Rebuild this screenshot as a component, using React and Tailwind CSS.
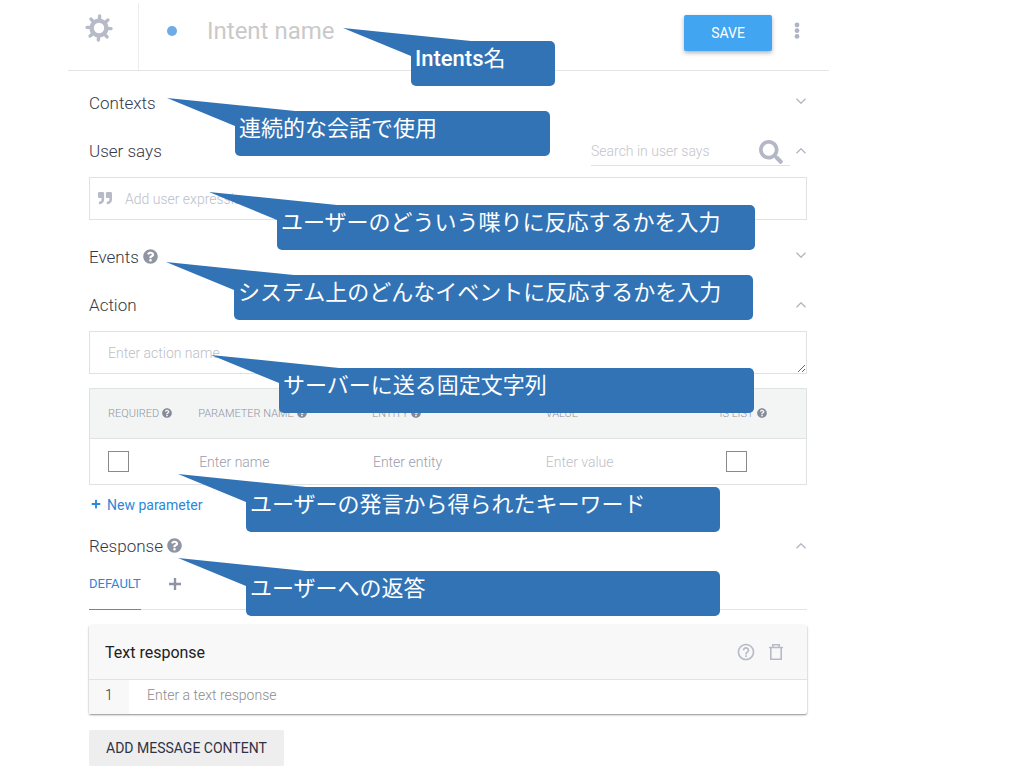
import React, { useState } from "react";
import {
  FaPlus,
  FaQuestionCircle,
  FaQuoteRight,
  FaSearch,
} from "react-icons/fa";
import { MdHelpOutline } from "react-icons/md";

const GearIcon = () => (
  <svg width="28" height="28" viewBox="0 0 28 28" fill="none" stroke="#b7bbc8">
    <circle cx="14" cy="14" r="7.4" strokeWidth="4.4" />
    <g strokeWidth="3.4" strokeLinecap="round">
      {[3, 48, 93, 138, 183, 228, 273, 318].map((angle) => (
        <path key={angle} d="M14 5.5V2" transform={`rotate(${angle} 14 14)`} />
      ))}
    </g>
  </svg>
);

const DotsIcon = () => (
  <svg width="6" height="18" viewBox="0 0 6 18" fill="#b0b4c2">
    <circle cx="3" cy="3" r="2.4" />
    <circle cx="3" cy="8.7" r="2.4" />
    <circle cx="3" cy="14.4" r="2.4" />
  </svg>
);

const TrashIcon = () => (
  <svg width="14" height="18" viewBox="0 0 14 18" fill="none" stroke="#b7bbc8" strokeWidth="1.6">
    <path d="M0 4.5h14M3.8 4V1.8h6.4V4M1.8 4.5v11.7h10.4V4.5" />
  </svg>
);

const Chevron = ({ open }) => (
  <svg width="10" height="6" viewBox="0 0 10 6" fill="none" stroke="#b0b5c2" strokeWidth="1.3">
    <path d={open ? "M0.5 5.3L5 0.8L9.5 5.3" : "M0.5 0.7L5 5.2L9.5 0.7"} />
  </svg>
);

// Blue speech bubble with a tail going up and to the left
const Callout = ({ place, children }) => (
  <div
    className={`absolute z-10 h-[45px] rounded-[5px] bg-[#3273b6] pl-1 text-[22px] leading-9 whitespace-nowrap text-white ${place}`}
  >
    <svg
      className="absolute -top-[13px] -left-[68px]"
      width="128"
      height="28"
      viewBox="0 0 128 28"
      fill="#3273b6"
    >
      <path d="M0 0L128 13V28H68Z" />
    </svg>
    <span className="relative">{children}</span>
  </div>
);

const SectionHeader = ({ title, help, open, onToggle, children }) => (
  <div className="flex h-12 items-center">
    <h2 className="pt-px text-[17px] font-light text-[#343849]">{title}</h2>
    {help && (
      <FaQuestionCircle className="mb-px ml-1 text-[15px] text-[#9095a3]" />
    )}
    <div className="ml-auto flex items-center">
      {children}
      <button
        type="button"
        aria-label={`Toggle ${title}`}
        onClick={onToggle}
        className={`mr-px flex h-6 w-[10px] items-center ${open ? "" : "pb-[5px]"}`}
      >
        <Chevron open={open} />
      </button>
    </div>
  </div>
);

const HeadCell = ({ label, help, className }) => (
  <th className={`p-0 text-left font-light ${className}`}>
    <span className="flex items-center gap-[3px] pb-px">
      <span className="pt-[2px]">{label}</span>
      {help && <FaQuestionCircle className="text-[10px] text-[#858a99]" />}
    </span>
  </th>
);

const App = () => {
  const [open, setOpen] = useState({
    contexts: false,
    userSays: true,
    events: false,
    action: true,
    response: true,
  });

  const toggle = (key) => setOpen((prev) => ({ ...prev, [key]: !prev[key] }));

  return (
    <div className="min-h-screen bg-white pr-[195px] pl-[68px] font-['Roboto','Noto_Sans_CJK_JP',sans-serif]">
      {/* Top bar */}
      <header className="relative flex h-[71px] border-b border-[#e4e4e6]">
        <div className="mt-[3px] flex w-[71px] justify-center border-r border-[#ececee] pt-[11px] pr-[9px]">
          <GearIcon />
        </div>
        <div className="flex h-[61px] flex-1 items-center pl-7">
          <span className="size-[10px] rounded-full bg-[#6fabe6]" />
          <input
            type="text"
            aria-label="Intent name"
            placeholder="Intent name"
            className="ml-[30px] min-w-0 flex-1 text-2xl outline-none placeholder:text-[#c9c9c9]"
          />
          <button
            type="button"
            className="mt-[5px] h-9 w-[88px] rounded-[2px] bg-[#42a5f2] text-sm text-white shadow-[0_2px_4px_rgba(0,0,0,0.3)]"
          >
            SAVE
          </button>
          <button type="button" aria-label="More" className="mx-[22px] mr-[29px]">
            <DotsIcon />
          </button>
        </div>
        <Callout place="top-[41px] left-[343px] w-[144px]">
          <span className="font-medium">Intents</span>名
        </Callout>
      </header>

      <main className="pt-2 pr-[22px] pl-[21px]">
        <section className="relative">
          <SectionHeader
            title="Contexts"
            open={open.contexts}
            onToggle={() => toggle("contexts")}
          />
          <Callout place="top-8 left-[146px] w-[315px]">
            連続的な会話で使用
          </Callout>
        </section>

        <section className="relative mb-[13px]">
          <SectionHeader
            title="User says"
            open={open.userSays}
            onToggle={() => toggle("userSays")}
          >
            <label className="mr-[6px] flex h-[29px] w-[199px] items-center border-b border-[#e0e1e4] pr-[7px]">
              <input
                type="text"
                aria-label="Search in user says"
                placeholder="Search in user says"
                className="min-w-0 flex-1 text-sm font-light outline-none placeholder:text-[#c3c5cc]"
              />
              <FaSearch className="mt-[2px] text-2xl text-[#b4b8c5]" />
            </label>
          </SectionHeader>
          {open.userSays && (
            <label className="mt-[2px] flex h-[43px] items-center border border-[#e0e1e2] pl-2">
              <FaQuoteRight className="mb-[2px] text-sm text-[#b7bbc8]" />
              <input
                type="text"
                aria-label="Add user expression"
                placeholder="Add user expression"
                className="ml-[13px] flex-1 text-sm font-light outline-none placeholder:text-[#bcc0ca]"
              />
            </label>
          )}
          <Callout place="top-[78px] left-[188px] w-[478px]">
            ユーザーのどういう喋りに反応するかを入力
          </Callout>
        </section>

        <section className="relative">
          <SectionHeader
            title="Events"
            help
            open={open.events}
            onToggle={() => toggle("events")}
          />
          <Callout place="top-[42px] left-[145px] w-[519px]">
            システム上のどんなイベントに反応するかを入力
          </Callout>
        </section>

        <section className="relative">
          <SectionHeader
            title="Action"
            open={open.action}
            onToggle={() => toggle("action")}
          />
          {open.action && (
            <>
              <textarea
                aria-label="Action name"
                placeholder="Enter action name"
                rows={1}
                className="mt-[2px] block h-[43px] w-full border border-[#e0e1e2] px-[18px] py-[11px] text-sm font-light outline-none placeholder:text-[#bcc0ca]"
              />
              <table className="mt-[14px] w-full table-fixed border border-[#dfe2e2]">
                <thead className="bg-[#f3f5f4] text-[11px] text-[#8f94a3]">
                  <tr className="h-[50px] border-b border-[#dfe2e2]">
                    <HeadCell label="REQUIRED" help className="w-[15%] pl-[18px]!" />
                    <HeadCell label="PARAMETER NAME" help className="w-[24%]" />
                    <HeadCell label="ENTITY" help className="w-[24%]" />
                    <HeadCell label="VALUE" className="w-[24%]" />
                    <HeadCell label="IS LIST" help className="w-[12%]" />
                  </tr>
                </thead>
                <tbody className="text-sm font-light">
                  <tr className="h-[46px]">
                    <td className="pl-[18px]">
                      <input
                        type="checkbox"
                        aria-label="Required"
                        className="block size-[21px] appearance-none border border-[#8a8a8a] checked:bg-[#42a5f2]"
                      />
                    </td>
                    <td className="pl-px">
                      <input
                        type="text"
                        aria-label="Parameter name"
                        placeholder="Enter name"
                        className="w-full outline-none placeholder:text-[#9a9eac]"
                      />
                    </td>
                    <td className="pl-px">
                      <input
                        type="text"
                        aria-label="Entity"
                        placeholder="Enter entity"
                        className="w-full outline-none placeholder:text-[#9a9eac]"
                      />
                    </td>
                    <td>
                      <input
                        type="text"
                        aria-label="Value"
                        placeholder="Enter value"
                        className="w-full outline-none placeholder:text-[#bcc0ca]"
                      />
                    </td>
                    <td className="pl-[6px]">
                      <input
                        type="checkbox"
                        aria-label="Is list"
                        className="block size-[21px] appearance-none border border-[#8a8a8a] checked:bg-[#42a5f2]"
                      />
                    </td>
                  </tr>
                </tbody>
              </table>
              <button
                type="button"
                className="flex h-10 items-center gap-[6px] pl-[2px] text-sm text-[#2b87d8]"
              >
                <FaPlus className="mb-[2px] text-[10px]" />
                New parameter
              </button>
            </>
          )}
          <Callout place="top-[87px] left-[190px] w-[475px]">
            サーバーに送る固定文字列
          </Callout>
          <Callout place="top-[206px] left-[157px] w-[474px]">
            ユーザーの発言から得られたキーワード
          </Callout>
        </section>

        <section className="relative -mt-[3px]">
          <SectionHeader
            title="Response"
            help
            open={open.response}
            onToggle={() => toggle("response")}
          />
          {open.response && (
            <>
              <div className="flex h-10 items-stretch border-b border-[#e2e3e5]">
                <button
                  type="button"
                  className="-mb-px border-b border-[#3a93e0] pb-[26px] text-[13px] leading-[27px] text-[#2b87d8]"
                >
                  DEFAULT
                </button>
                <button
                  type="button"
                  aria-label="Add response tab"
                  className="ml-[27px] flex h-[27px] items-center text-[#8f94a3]"
                >
                  <svg width="14" height="14" viewBox="0 0 14 14" stroke="currentColor" strokeWidth="2.4">
                    <path d="M7 1v12M1 7h12" />
                  </svg>
                </button>
              </div>

              <div className="mt-[15px] rounded-[2px] shadow-[0_1px_2px_rgba(0,0,0,0.45)]">
                <div className="flex h-[55px] items-center border-b border-[#e2e2e2] bg-[#f8f8f8] pr-6 pl-4">
                  <h3 className="pt-px text-base text-[#212121]">Text response</h3>
                  <button
                    type="button"
                    aria-label="Help"
                    className="ml-auto text-xl text-[#b7bbc8]"
                  >
                    <MdHelpOutline />
                  </button>
                  <button type="button" aria-label="Delete" className="ml-[13px]">
                    <TrashIcon />
                  </button>
                </div>
                <label className="flex h-[34px] items-stretch">
                  <span className="flex w-10 items-center justify-center bg-[#f8f8f8] pb-1 text-sm font-light text-[#333]">
                    1
                  </span>
                  <input
                    type="text"
                    placeholder="Enter a text response"
                    className="min-w-0 flex-1 pb-1 pl-[18px] text-sm font-light outline-none placeholder:text-[#8c8c8c]"
                  />
                </label>
              </div>

              <button
                type="button"
                className="mt-4 h-9 rounded-[2px] bg-[#eeeeee] px-[17px] text-sm text-[#2f3344]"
              >
                ADD MESSAGE CONTENT
              </button>
            </>
          )}
          <Callout place="top-[49px] left-[157px] w-[474px]">
            ユーザーへの返答
          </Callout>
        </section>
      </main>
    </div>
  );
};

export default App;
